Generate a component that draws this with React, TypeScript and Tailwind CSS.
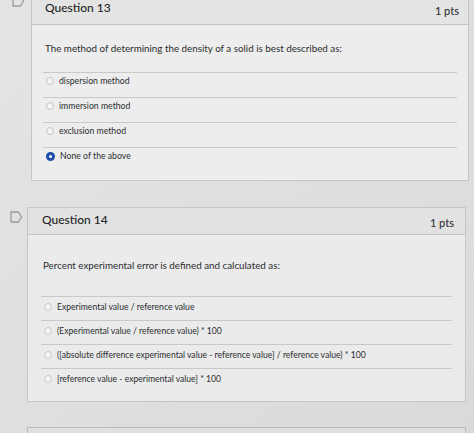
import React from 'react';

type Question = {
  title: string;
  prompt: string;
  options: string[];
  selected?: number;
};

const questions: Question[] = [
  {
    title: 'Question 13',
    prompt: 'The method of determining the density of a solid is best described as:',
    options: ['dispersion method', 'immersion method', 'exclusion method', 'None of the above'],
    selected: 3,
  },
  {
    title: 'Question 14',
    prompt: 'Percent experimental error is defined and calculated as:',
    options: [
      'Experimental value / reference value',
      '(Experimental value / reference value) * 100',
      '([absolute difference experimental value - reference value] / reference value) * 100',
      '[reference value - experimental value] * 100',
    ],
  },
];

function Flag() {
  return (
    <svg width="13" height="12" viewBox="0 0 13 12" fill="none">
      <path d="M1 1 H8.5 L11.5 6 L8.5 11 H1 Z" stroke="#9a9a9a" strokeWidth="1.3" strokeLinejoin="round" />
    </svg>
  );
}

function Radio({ checked }: { checked: boolean }) {
  if (checked) {
    return (
      <span className="flex h-[9px] w-[9px] shrink-0 items-center justify-center rounded-full bg-[#1d4fa8]">
        <span className="h-[3px] w-[3px] rounded-full bg-white" />
      </span>
    );
  }
  return <span className="h-[8px] w-[8px] shrink-0 rounded-full border border-[#c4c4c4] bg-[#f3f3f3]" />;
}

export default function App() {
  const [q13, q14] = questions;
  return (
    <div
      className="relative h-[433px] w-[474px] overflow-hidden bg-gradient-to-br from-[#e4e4e4] to-[#dadada] text-[#2a2d30]"
      style={{ fontFamily: 'Lato, "Open Sans", sans-serif' }}
    >
      {/* flag markers in the left gutter */}
      <div className="absolute left-[12px] top-[-5px]">
        <Flag />
      </div>
      <div className="absolute left-[10px] top-[211px]">
        <Flag />
      </div>

      {/* Question 13 (header cut off at the top) */}
      <div className="ml-[31px] mt-[-6px] w-[438px] border border-[#c6c6c6] bg-[#ededed]">
        <div className="flex h-[30px] items-center justify-between border-b border-[#c2c2c2] bg-[#e4e4e4] pl-[13px] pr-[9px]">
          <span className="-mt-[4px] text-[12px] font-medium text-[#1f1f1f]">{q13.title}</span>
          <span className="mt-[4px] text-[11px] font-medium text-[#333]">1 pts</span>
        </div>
        <div className="px-[11px] pb-[8px] pt-[15px]">
          <p className="mb-[16px] pl-[2px] text-[9.8px] leading-[16px]">{q13.prompt}</p>
          {q13.options.map((opt, i) => (
            <div key={opt} className="flex h-[25px] items-start gap-[5px] border-t border-[#c9c9c9] pl-[3px] pt-[1px]">
              <div className="flex h-[14px] items-center">
                <Radio checked={q13.selected === i} />
              </div>
              <span className="text-[8.7px] leading-[14px]">{opt}</span>
            </div>
          ))}
        </div>
      </div>

      {/* Question 14 */}
      <div className="ml-[27px] mt-[26px] w-[439px] border border-[#c6c6c6] bg-[#ebebeb]">
        <div className="flex h-[27px] items-center justify-between border-b border-[#c2c2c2] bg-[#e2e2e2] pl-[14px] pr-[11px]">
          <span className="-mt-[3px] text-[12px] font-medium text-[#1f1f1f]">{q14.title}</span>
          <span className="mt-[5px] text-[11px] font-medium text-[#333]">1 pts</span>
        </div>
        <div className="px-[13px] pb-[9px] pt-[22px]">
          <p className="mb-[23px] pl-[2px] text-[9.8px] leading-[16px]">{q14.prompt}</p>
          {q14.options.map((opt) => (
            <div key={opt} className="flex h-[24px] items-start gap-[5px] border-t border-[#c9c9c9] pl-[3px] pt-[3px]">
              <div className="flex h-[14px] items-center">
                <Radio checked={false} />
              </div>
              <span className="text-[8.6px] leading-[14px]">{opt}</span>
            </div>
          ))}
        </div>
      </div>

      {/* next question peeking at the bottom */}
      <div className="ml-[27px] mt-[25px] h-[20px] w-[439px] border border-[#b9b9b9] bg-[#e0e0e0]" />
    </div>
  );
}
